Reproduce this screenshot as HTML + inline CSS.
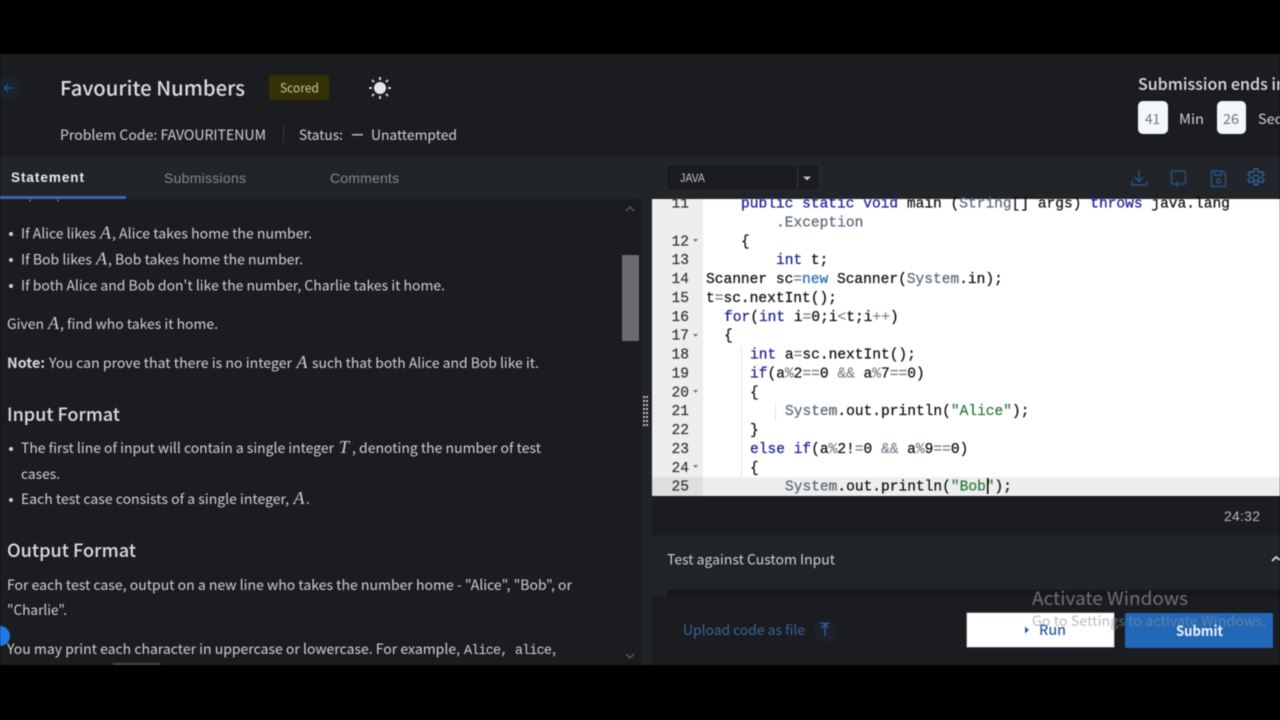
<!DOCTYPE html>
<html lang="en"><head><meta charset="utf-8"><title>Favourite Numbers</title>
<style>
html,body{margin:0;padding:0;background:#000;width:1280px;height:720px;overflow:hidden}
#w{position:relative;width:1280px;height:720px;overflow:hidden;filter:blur(.4px)}
svg{position:absolute;left:0;top:0}
text{font-family:"Noto Sans CJK JP","Liberation Sans",sans-serif;font-size:14px;fill:#cfd0d2;white-space:pre}
.m{font-family:"Liberation Serif",serif;font-style:italic;font-size:18px;fill:#cfd0d2}
.h{font-size:18px;font-weight:500;fill:#dcddde}
.c text{font-family:"Liberation Mono",monospace;font-size:14.56px;fill:#111;stroke:#111;stroke-width:.25px}
.c .k{fill:#1f1f9c;stroke:#1f1f9c}.c .g{fill:#5d6b78;stroke:#5d6b78}.c .s{fill:#2f7d3a;stroke:#2f7d3a}.c .o{fill:#7d8791;stroke:#7d8791}.c .n{fill:#2f6fb5;stroke:#2f6fb5}
.l text{font-family:"Liberation Mono",monospace;font-size:14.56px;fill:#333;stroke:#333;stroke-width:.2px;text-anchor:end}
</style></head><body><div id="w">
<svg width="1280" height="720" viewBox="0 0 1280 720" xmlns="http://www.w3.org/2000/svg">
<rect width="1280" height="720" fill="#000"/>
<rect y="54" width="1280" height="103" fill="#1a1c1f"/>
<rect y="157" width="1280" height="42" fill="#212428"/>
<rect y="199" width="640" height="466" fill="#1a1c1f"/>
<rect x="640" y="199" width="12" height="466" fill="#212427"/>
<rect x="652" y="496" width="628" height="39" fill="#1a1c1f"/>
<rect x="652" y="535" width="628" height="61" fill="#202327"/>
<rect x="667" y="590" width="613" height="6" fill="#15171a"/>
<rect x="652" y="596" width="628" height="69" fill="#1a1c1f"/>

<!-- header -->
<circle cx="8" cy="88" r="12" fill="#1a222c"/>
<path d="M13 88H5M8 84.500L4.500 88L8 91.500" fill="none" stroke="#24568f" stroke-width="1.300"/>
<text x="60" y="95.500" class="h" style="font-size:20px" textLength="185" lengthAdjust="spacingAndGlyphs">Favourite Numbers</text>
<rect x="269" y="75" width="60" height="25" rx="2" fill="#363105"/>
<text x="280" y="92.500" style="font-size:12.500px;fill:#c8c49a" textLength="39" lengthAdjust="spacingAndGlyphs">Scored</text>
<circle cx="380" cy="88" r="6" fill="#e4e5e7"/>
<path d="M380 77v3M380 96v3M369 88h3M388 88h3M372 80l2 2M386 94l2 2M372 96l2-2M386 82l2-2" stroke="#e4e5e7" stroke-width="1.800"/>
<text x="60" y="140" textLength="206" lengthAdjust="spacingAndGlyphs">Problem Code: FAVOURITENUM</text>
<rect x="283" y="125" width="1" height="19" fill="#34363a"/>
<text x="299" y="140" textLength="44" lengthAdjust="spacingAndGlyphs">Status:</text>
<rect x="352" y="134" width="11" height="1.500" fill="#b8babc"/>
<text x="371" y="140" textLength="86" lengthAdjust="spacingAndGlyphs">Unattempted</text>

<text x="1138" y="90" style="font-size:16px;font-weight:500;fill:#dcddde" textLength="148" lengthAdjust="spacingAndGlyphs">Submission ends in</text>
<rect x="1138" y="101" width="30" height="33" rx="5" fill="#f4f7fa"/>
<text x="1145" y="124" style="fill:#70757a" textLength="15" lengthAdjust="spacingAndGlyphs">41</text>
<text x="1179" y="124" textLength="25" lengthAdjust="spacingAndGlyphs">Min</text>
<rect x="1217" y="101" width="29" height="33" rx="5" fill="#f4f7fa"/>
<text x="1223" y="124" style="fill:#70757a" textLength="16" lengthAdjust="spacingAndGlyphs">26</text>
<text x="1258" y="124" textLength="24" lengthAdjust="spacingAndGlyphs">Sec</text>

<!-- tabs -->
<text x="11" y="182" style="font-family:'Liberation Sans',sans-serif;font-weight:700;font-size:13.500px;fill:#eceded" textLength="73">Statement</text>
<text x="164" y="183" style="font-family:'Liberation Sans',sans-serif;fill:#85888c" textLength="82">Submissions</text>
<text x="330" y="183" style="font-family:'Liberation Sans',sans-serif;fill:#85888c" textLength="69">Comments</text>
<rect y="196" width="126" height="3" fill="#3a68ad"/>
<path d="M30 199.500v2M58 199.500v2" stroke="#8a8c8e" stroke-width="1.200"/>

<!-- toolbar -->
<rect x="666.500" y="164.500" width="153" height="26" rx="2" fill="#1a1c1f" stroke="#2a2d31"/>
<text x="680" y="182" style="font-family:'Liberation Sans',sans-serif;font-size:12px;fill:#c0c2c4" textLength="25" lengthAdjust="spacingAndGlyphs">JAVA</text>
<rect x="797" y="166" width="1" height="22" fill="#36393d"/>
<path d="M803 176.500h8l-4 4z" fill="#c0c2c4"/>
<g fill="none" stroke="#28507f" stroke-width="1.500">
<path d="M1139 170v11M1134.500 177l4.500 4.500 4.500-4.500M1132 181v4h14.500v-4"/>
<path d="M1176 184h-3a1.500 1.500 0 0 1-1.500-1.500v-10a1.500 1.500 0 0 1 1.500-1.500h11a1.500 1.500 0 0 1 1.500 1.500v10a1.500 1.500 0 0 1-1.500 1.500h-8M1178 181.500l-2.500 2.500 2.500 2.500"/>
<path d="M1211.500 171h11l3 3v12.500h-14zM1214.500 171v4h7v-4"/><circle cx="1218.500" cy="181" r="2"/>
</g>
<g fill="none" stroke="#2e5f97" stroke-width="1.500"><circle cx="1256" cy="178" r="3"/>
<path d="M1254.500 169h3l.5 2.500 2 1 2.500-1 1.500 2.500-2 1.800v2.400l2 1.800-1.500 2.500-2.500-1-2 1-.5 2.500h-3l-.5-2.500-2-1-2.500 1-1.500-2.500 2-1.800v-2.400l-2-1.800 1.500-2.500 2.500 1 2-1z"/></g>

<!-- statement -->
<g fill="#cfd0d2"><circle cx="11" cy="234" r="2"/><circle cx="11" cy="260" r="2"/><circle cx="11" cy="286" r="2"/><circle cx="11" cy="449" r="2"/><circle cx="11" cy="500" r="2"/></g>
<text x="21" y="238.500" textLength="75" lengthAdjust="spacingAndGlyphs">If Alice likes</text><text x="100" y="238.500" class="m">A</text>
<text x="112" y="238.500" textLength="200" lengthAdjust="spacingAndGlyphs">, Alice takes home the number.</text>
<text x="21" y="264.500" textLength="71" lengthAdjust="spacingAndGlyphs">If Bob likes</text><text x="96" y="264.500" class="m">A</text>
<text x="108" y="264.500" textLength="195" lengthAdjust="spacingAndGlyphs">, Bob takes home the number.</text>
<text x="21" y="290.500" textLength="424" lengthAdjust="spacingAndGlyphs">If both Alice and Bob don't like the number, Charlie takes it home.</text>
<text x="7" y="329" textLength="37" lengthAdjust="spacingAndGlyphs">Given</text><text x="48" y="329" class="m">A</text>
<text x="60" y="329" textLength="158" lengthAdjust="spacingAndGlyphs">, find who takes it home.</text>
<text x="7" y="368" style="font-weight:700;fill:#d8d9db" textLength="38" lengthAdjust="spacingAndGlyphs">Note:</text>
<text x="49" y="368" textLength="243" lengthAdjust="spacingAndGlyphs">You can prove that there is no integer</text><text x="296.500" y="368" class="m">A</text>
<text x="312" y="368" textLength="227" lengthAdjust="spacingAndGlyphs">such that both Alice and Bob like it.</text>
<text x="7" y="421" class="h" textLength="113" lengthAdjust="spacingAndGlyphs">Input Format</text>
<text x="21" y="453" textLength="313" lengthAdjust="spacingAndGlyphs">The first line of input will contain a single integer</text><text x="339" y="453" class="m">T</text>
<text x="352" y="453" textLength="189" lengthAdjust="spacingAndGlyphs">, denoting the number of test</text>
<text x="21" y="479" textLength="39" lengthAdjust="spacingAndGlyphs">cases.</text>
<text x="21" y="504" textLength="268" lengthAdjust="spacingAndGlyphs">Each test case consists of a single integer,</text><text x="293.500" y="504" class="m">A</text><text x="306" y="504">.</text>
<text x="7" y="557" class="h" textLength="129" lengthAdjust="spacingAndGlyphs">Output Format</text>
<text x="7" y="590" textLength="565" lengthAdjust="spacingAndGlyphs">For each test case, output on a new line who takes the number home - "Alice", "Bob", or</text>
<text x="7" y="615" textLength="60" lengthAdjust="spacingAndGlyphs">"Charlie".</text>
<text x="7" y="654" textLength="453" lengthAdjust="spacingAndGlyphs">You may print each character in uppercase or lowercase. For example,</text>
<text x="464" y="654" style="font-family:'Liberation Mono',monospace;font-size:13.500px" textLength="88">Alice, alice</text><text x="552" y="654">,</text>
<circle cx="0" cy="636" r="10" fill="#1e7be0"/>
<rect x="622" y="255" width="17" height="86" fill="#696b6e"/>
<path d="M626 211l4-4 4 4M626 654l4 4 4-4" fill="none" stroke="#55585b" stroke-width="1.500"/>
<rect x="113" y="663" width="47" height="2" fill="#44474a"/>
<rect x="640" y="199" width="1" height="466" fill="#16181a"/>
<g fill="#c4c6c8"><rect x="643" y="396" width="2" height="2"/><rect x="646" y="396" width="2" height="2"/><rect x="643" y="400" width="2" height="2"/><rect x="646" y="400" width="2" height="2"/><rect x="643" y="404" width="2" height="2"/><rect x="646" y="404" width="2" height="2"/><rect x="643" y="408" width="2" height="2"/><rect x="646" y="408" width="2" height="2"/><rect x="643" y="412" width="2" height="2"/><rect x="646" y="412" width="2" height="2"/><rect x="643" y="416" width="2" height="2"/><rect x="646" y="416" width="2" height="2"/><rect x="643" y="420" width="2" height="2"/><rect x="646" y="420" width="2" height="2"/><rect x="643" y="424" width="2" height="2"/><rect x="646" y="424" width="2" height="2"/></g>

<!-- editor -->
<rect x="652" y="199" width="628" height="297" fill="#fff"/>
<rect x="652" y="199" width="51" height="297" fill="#eeeeee"/>
<rect x="652" y="477" width="628" height="19" fill="#eeeeee"/>
<rect x="652" y="477" width="51" height="19" fill="#dfdfdf"/>
<g fill="#e4e4e4"><rect x="741" y="346" width="1" height="130"/><rect x="775" y="402" width="1" height="19"/></g>
<g class="l">
<text x="689" y="207.600">11</text><text x="689" y="245.300">12</text><text x="689" y="264.200">13</text><text x="689" y="283.100">14</text><text x="689" y="302">15</text><text x="689" y="320.900">16</text><text x="689" y="339.700">17</text><text x="689" y="358.600">18</text><text x="689" y="377.500">19</text><text x="689" y="396.400">20</text><text x="689" y="415.200">21</text><text x="689" y="434.100">22</text><text x="689" y="453">23</text><text x="689" y="471.900">24</text><text x="689" y="490.700">25</text>
</g>
<path d="M693 239h5l-2.500 3zM693 334h5l-2.500 3zM693 390h5l-2.500 3zM693 465h5l-2.500 3z" fill="#777"/>
<g class="c">
<text x="741" y="207.600"><tspan class="k">public static void</tspan> main (<tspan class="g">String</tspan>[] args) <tspan class="k">throws</tspan> java.lang</text>
<text x="776" y="226.500" class="g">.Exception</text>
<text x="741" y="245.300">{</text>
<text x="776" y="264.200"><tspan class="k">int</tspan> t;</text>
<text x="706" y="283.100">Scanner sc<tspan class="o">=</tspan><tspan class="n">new</tspan> Scanner(<tspan class="g">System</tspan>.in);</text>
<text x="706" y="302">t<tspan class="o">=</tspan>sc.nextInt();</text>
<text x="724" y="320.900"><tspan class="k">for</tspan>(<tspan class="k">int</tspan> i<tspan class="o">=</tspan>0;i<tspan class="o">&lt;</tspan>t;i<tspan class="o">++</tspan>)</text>
<text x="724" y="339.700">{</text>
<text x="750" y="358.600"><tspan class="k">int</tspan> a<tspan class="o">=</tspan>sc.nextInt();</text>
<text x="750" y="377.500"><tspan class="k">if</tspan>(a<tspan class="o">%</tspan>2<tspan class="o">==</tspan>0 <tspan class="o">&amp;&amp;</tspan> a<tspan class="o">%</tspan>7<tspan class="o">==</tspan>0)</text>
<text x="750" y="396.400">{</text>
<text x="785" y="415.200"><tspan class="g">System</tspan>.out.println(<tspan class="s">"Alice"</tspan>);</text>
<text x="750" y="434.100">}</text>
<text x="750" y="453"><tspan class="k">else if</tspan>(a<tspan class="o">%</tspan>2!<tspan class="o">=</tspan>0 <tspan class="o">&amp;&amp;</tspan> a<tspan class="o">%</tspan>9<tspan class="o">==</tspan>0)</text>
<text x="750" y="471.900">{</text>
<text x="785" y="490.700"><tspan class="g">System</tspan>.out.println(<tspan class="s">"Bob"</tspan>);</text>
</g>
<rect x="987" y="478" width="1.500" height="16" fill="#000"/>

<!-- bottom right -->
<text x="1224" y="521" style="font-family:'Liberation Sans',sans-serif;font-size:14px;fill:#b5b7b9" textLength="36">24:32</text>
<text x="667" y="564.500" textLength="168" lengthAdjust="spacingAndGlyphs">Test against Custom Input</text>
<path d="M1272 561l4-4 4 3" fill="none" stroke="#d5d6d8" stroke-width="1.800"/>
<text x="683" y="635" style="fill:#386599" textLength="122" lengthAdjust="spacingAndGlyphs">Upload code as file</text>
<circle cx="825" cy="630" r="12" fill="#1b222b"/>
<path d="M825 636v-11M821.500 628l3.500-3.500 3.500 3.500M820.500 623.500h9" fill="none" stroke="#386599" stroke-width="1.300"/>
<rect x="967" y="613" width="147" height="34" fill="#fff" stroke="#cfd8e3" stroke-width=".8"/>
<path d="M1025 626.500l4 3.500-4 3.500z" fill="#2a5f9c"/>
<text x="1039" y="635" style="font-weight:500;fill:#2a5f9c" textLength="27" lengthAdjust="spacingAndGlyphs">Run</text>
<rect x="1125" y="613" width="148" height="35" rx="1.500" fill="#2368b8"/>
<text x="1032" y="605" style="font-size:18.500px;fill:#6e7175" textLength="156" lengthAdjust="spacingAndGlyphs">Activate Windows</text>
<text x="1032" y="626" style="font-size:14px;fill:rgba(140,145,150,.62)" textLength="234" lengthAdjust="spacingAndGlyphs">Go to Settings to activate Windows.</text>
<text x="1176" y="636" style="font-weight:700;fill:#eef2f7" textLength="47" lengthAdjust="spacingAndGlyphs">Submit</text>
</svg>
</div></body></html>
